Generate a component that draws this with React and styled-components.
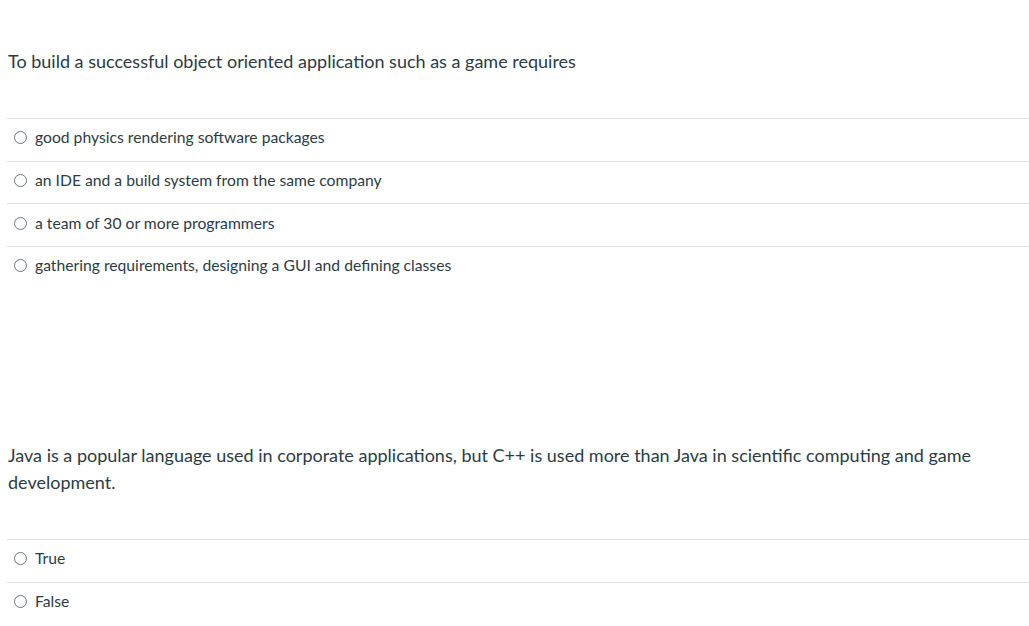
import React from "react";
import styled, { createGlobalStyle } from "styled-components";

const GlobalStyle = createGlobalStyle`
  body {
    margin: 0;
    background: #fff;
    font-family: Lato, "Liberation Sans", sans-serif;
    color: #2d3b45;
  }
`;

const Page = styled.div`
  padding: 0 0 0 7px;
`;

const Question = styled.div`
  padding-top: ${(p) => p.top}px;
`;

const QuestionText = styled.div`
  font-size: 18px;
  line-height: 27px;
  padding-left: 1px;
  padding-right: 50px;
  margin-bottom: 43px;
`;

const Answer = styled.label`
  display: flex;
  align-items: center;
  box-sizing: border-box;
  height: 42.67px;
  padding-bottom: 5px;
  border-top: 1px solid #dde0e3;
  padding-left: 7px;
  font-size: 15.7px;
  cursor: pointer;
`;

const Radio = styled.span`
  width: 11px;
  height: 11px;
  border: 1px solid #6b7780;
  border-radius: 50%;
  margin-right: 8px;
  margin-top: 1px;
  flex-shrink: 0;
`;

const questions = [
  {
    top: 48,
    text: "To build a successful object oriented application such as a game requires",
    answers: [
      "good physics rendering software packages",
      "an IDE and a build system from the same company",
      "a team of 30 or more programmers",
      "gathering requirements, designing a GUI and defining classes",
    ],
  },
  {
    top: 153.5,
    text: "Java is a popular language used in corporate applications, but C++ is used more than Java in scientific computing and game development.",
    answers: ["True", "False"],
  },
];

const App = () => {
  return (
    <Page>
      <GlobalStyle />
      {questions.map((q, i) => (
        <Question key={i} top={q.top}>
          <QuestionText>{q.text}</QuestionText>
          {q.answers.map((a) => (
            <Answer key={a}>
              <Radio />
              {a}
            </Answer>
          ))}
        </Question>
      ))}
    </Page>
  );
};

export default App;
